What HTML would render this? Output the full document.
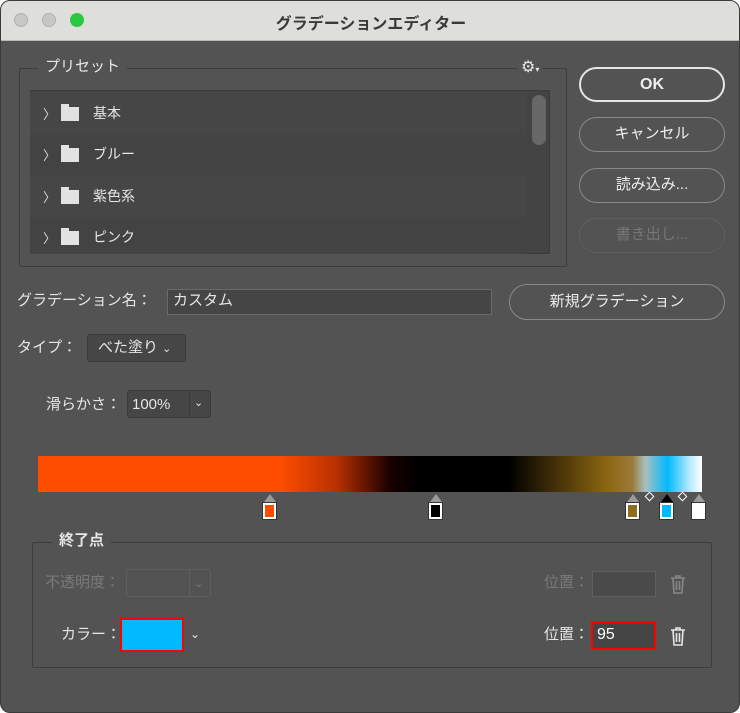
<!DOCTYPE html><html><head><meta charset="utf-8"><style>
*{margin:0;padding:0;box-sizing:border-box}
body{width:740px;height:713px;background:#fff;font-family:"Liberation Sans","Noto Sans CJK JP",sans-serif;overflow:hidden;position:relative}
.win{position:absolute;left:0;top:0;width:740px;height:713px;background:#535353;border-radius:10px;overflow:hidden;border:1px solid #3a3a3a}
.tb{position:absolute;left:0;top:0;width:740px;height:40px;background:#dededb;border-bottom:1px solid #b9b9b9}
.dot{position:absolute;top:12px;width:14px;height:14px;border-radius:50%}
.tt{position:absolute;top:9px;left:0;width:740px;text-align:center;font-size:16px;font-weight:bold;color:#3a3a3a}
.a{position:absolute}
.t{position:absolute;color:#e6e6e6;font-size:14px;line-height:18px;white-space:nowrap}
.btn{position:absolute;left:578px;width:146px;height:35px;border:1.5px solid #8a8a8a;border-radius:18px;color:#eee;font-size:15px;text-align:center;line-height:32px}
.row{position:absolute;left:29px;width:497px;height:41px;background:#464646}
.fold{position:absolute;width:18px;height:14px;background:#e2e2e2;border-top:2px solid #e2e2e2}
.fold:before{content:"";position:absolute;left:0;top:-5px;width:8px;height:3px;background:#e2e2e2}
.chev{position:absolute;color:#ddd;font-size:13px}
.stop{position:absolute;top:493px;width:13px}
.stop i{display:block;width:0;height:0;margin:0 auto;border-left:6px solid transparent;border-right:6px solid transparent;border-bottom:8px solid #9a9a9a}
.stop b{display:block;width:13px;height:16px;border:2px solid #fff;margin-top:1px;box-shadow:0 0 0 1px #333}
.dm{position:absolute;top:492px;width:7px;height:7px;border:1.5px solid #fff;transform:rotate(45deg)}
</style></head><body><div class="win">
<div class="tb"><div class="dot" style="left:13px;background:#c7c7c5;border:1px solid #b0b0b0"></div><div class="dot" style="left:41px;background:#c7c7c5;border:1px solid #b0b0b0"></div><div class="dot" style="left:69px;background:#2ac840"></div><div class="tt">グラデーションエディター</div></div>

<div class="a" style="left:18px;top:67px;width:548px;height:199px;border:1px solid #3c3c3c;border-radius:2px"></div>
<div class="t" style="left:37px;top:57px;background:#535353;padding:0 7px;font-size:15px">プリセット</div>
<div class="t" style="left:516px;top:58px;background:#535353;padding:0 4px;font-size:16px">⚙<span style="font-size:8px">▾</span></div>
<div class="a" style="left:29px;top:89px;width:520px;height:164px;background:#434343;border:1px solid #3a3a3a"></div>
<div class="row" style="top:90px;height:44px"></div><div class="row" style="top:134px;background:#434343"></div><div class="row" style="top:175px"></div><div class="row" style="top:216px;height:37px;background:#434343"></div>
<div class="a" style="left:531px;top:94px;width:14px;height:50px;background:#676767;border-radius:7px"></div>
<div class="chev" style="left:42px;top:103px">〉</div><div class="fold" style="left:60px;top:106px"></div><div class="t" style="left:92px;top:103px">基本</div>
<div class="chev" style="left:42px;top:144px">〉</div><div class="fold" style="left:60px;top:147px"></div><div class="t" style="left:92px;top:144px">ブルー</div>
<div class="chev" style="left:42px;top:186px">〉</div><div class="fold" style="left:60px;top:189px"></div><div class="t" style="left:92px;top:186px">紫色系</div>
<div class="chev" style="left:42px;top:227px">〉</div><div class="fold" style="left:60px;top:230px"></div><div class="t" style="left:92px;top:227px">ピンク</div>

<div class="btn" style="top:66px;border:2px solid #e6e6e6;font-weight:bold;font-size:16px">OK</div>
<div class="btn" style="top:116px">キャンセル</div>
<div class="btn" style="top:167px">読み込み...</div>
<div class="btn" style="top:217px;color:#777;border-color:#5f5f5f">書き出し...</div>

<div class="t" style="left:16px;top:291px;font-size:15px">グラデーション名：</div>
<div class="a" style="left:166px;top:288px;width:325px;height:26px;background:#454545;border:1px solid #6a6a6a"></div>
<div class="t" style="left:172px;top:291px;font-size:15px">カスタム</div>
<div class="btn" style="left:508px;top:283px;width:216px;height:36px;line-height:33px">新規グラデーション</div>

<div class="t" style="left:16px;top:338px;font-size:15px">タイプ：</div>
<div class="a" style="left:86px;top:333px;width:99px;height:28px;background:#464646;border:1px solid #3a3a3a;border-radius:3px"></div>
<div class="t" style="left:97px;top:338px;font-size:15px">べた塗り <span style="font-size:11px">⌄</span></div>

<div class="t" style="left:45px;top:395px;font-size:15px">滑らかさ：</div>
<div class="a" style="left:126px;top:389px;width:84px;height:28px;background:#464646;border:1px solid #3a3a3a;border-radius:3px"></div>
<div class="a" style="left:188px;top:389px;width:1px;height:28px;background:#3a3a3a"></div>
<div class="t" style="left:131px;top:395px;font-size:15px">100%</div><div class="t" style="left:193px;top:393px;font-size:11px">⌄</div>

<div class="a" style="left:37px;top:455px;width:664px;height:36px;background:linear-gradient(90deg,#ff4d00 0%,#ff4d00 36.4%,#b83000 45%,#1a0000 53%,#000 57%,#000 71%,#3a2a08 77%,#8a6510 85.5%,#9a7a3a 89.5%,#a8c0c0 91.5%,#00b9ff 94.8%,#b0e8ff 98%,#fff 100%)"></div>
<div class="stop" style="left:262px"><i></i><b style="background:#ff4d00"></b></div>
<div class="stop" style="left:428px"><i></i><b style="background:#000"></b></div>
<div class="stop" style="left:625px"><i></i><b style="background:#8f6c1e"></b></div>
<div class="stop" style="left:659px"><i style="border-bottom-color:#000"></i><b style="background:#00b9ff"></b></div>
<div class="stop" style="left:691px"><i></i><b style="background:#fff"></b></div>
<div class="dm" style="left:645px"></div><div class="dm" style="left:678px"></div>

<div class="a" style="left:31px;top:541px;width:680px;height:126px;border:1px solid #3c3c3c;border-radius:2px"></div>
<div class="t" style="left:51px;top:531px;background:#535353;padding:0 7px;font-size:15px;font-weight:bold">終了点</div>
<div class="t" style="left:44px;top:573px;font-size:15px;color:#7a7a7a">不透明度：</div>
<div class="a" style="left:125px;top:568px;width:85px;height:28px;border:1px solid #5f5f5f;border-radius:3px"></div>
<div class="a" style="left:188px;top:568px;width:1px;height:28px;background:#5f5f5f"></div>
<div class="t" style="left:193px;top:574px;font-size:11px;color:#777">⌄</div>
<div class="t" style="left:543px;top:573px;font-size:15px;color:#7a7a7a">位置：</div>
<div class="a" style="left:591px;top:570px;width:64px;height:26px;background:#4b4b4b;border:1px solid #5f5f5f"></div>
<svg class="a" style="left:669px;top:573px" width="16" height="20" viewBox="0 0 16 20" fill="none" stroke="#888" stroke-width="1.6"><path d="M1 4h14M6 4V2h4v2M3 4l1 15h8l1-15M6.5 7v9M9.5 7v9"/></svg>

<div class="t" style="left:60px;top:625px;font-size:15px">カラー：</div>
<div class="a" style="left:119px;top:617px;width:64px;height:34px;background:#00b9ff;border:2px solid #f00"></div>
<div class="t" style="left:189px;top:624px;font-size:12px">⌄</div>
<div class="t" style="left:543px;top:625px;font-size:15px">位置：</div>
<div class="a" style="left:590px;top:620px;width:65px;height:29px;background:#454545;border:2px solid #f00"></div>
<div class="t" style="left:596px;top:625px;font-size:16px;color:#fff">95</div>
<svg class="a" style="left:669px;top:625px" width="16" height="20" viewBox="0 0 16 20" fill="none" stroke="#e6e6e6" stroke-width="1.6"><path d="M1 4h14M6 4V2h4v2M3 4l1 15h8l1-15M6.5 7v9M9.5 7v9"/></svg>
</div></body></html>
